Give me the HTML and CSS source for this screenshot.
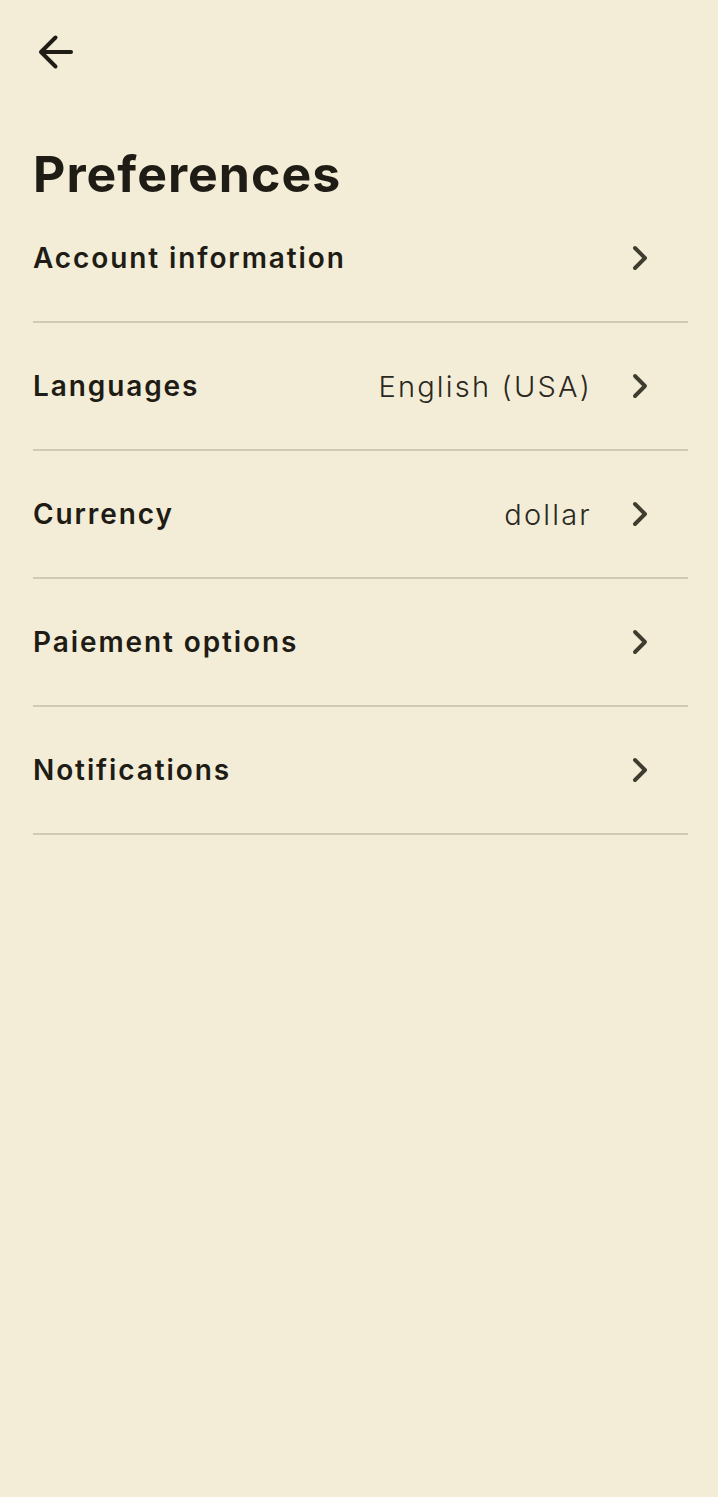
FILE: index.html
```html
<!DOCTYPE html>
<html lang="en">
<head>
<meta charset="utf-8">
<title>Preferences</title>
<link rel="stylesheet" href="styles.css">
</head>
<body>
<div class="page">
  <header class="topbar">
    <button class="back" aria-label="Back">
      <svg width="40" height="40" viewBox="0 0 40 40" fill="none" stroke="#1e1c14" stroke-width="4" stroke-linecap="round" stroke-linejoin="round"><path d="M35 20H6"/><path d="M19.5 5.5L5 20l14.5 14.5"/></svg>
    </button>
  </header>
  <h1 class="title">Preferences</h1>
  <ul class="list">
    <li class="row"><span class="label">Account information</span><span class="value"></span><svg class="chev" width="20" height="28" viewBox="0 0 20 28" fill="none" stroke="#3f3c30" stroke-width="3.9" stroke-linecap="round" stroke-linejoin="round"><path d="M5 4l10 10-10 10"/></svg></li>
    <li class="row"><span class="label">Languages</span><span class="value">English (USA)</span><svg class="chev" width="20" height="28" viewBox="0 0 20 28" fill="none" stroke="#3f3c30" stroke-width="3.9" stroke-linecap="round" stroke-linejoin="round"><path d="M5 4l10 10-10 10"/></svg></li>
    <li class="row"><span class="label">Currency</span><span class="value">dollar</span><svg class="chev" width="20" height="28" viewBox="0 0 20 28" fill="none" stroke="#3f3c30" stroke-width="3.9" stroke-linecap="round" stroke-linejoin="round"><path d="M5 4l10 10-10 10"/></svg></li>
    <li class="row"><span class="label">Paiement options</span><span class="value"></span><svg class="chev" width="20" height="28" viewBox="0 0 20 28" fill="none" stroke="#3f3c30" stroke-width="3.9" stroke-linecap="round" stroke-linejoin="round"><path d="M5 4l10 10-10 10"/></svg></li>
    <li class="row"><span class="label">Notifications</span><span class="value"></span><svg class="chev" width="20" height="28" viewBox="0 0 20 28" fill="none" stroke="#3f3c30" stroke-width="3.9" stroke-linecap="round" stroke-linejoin="round"><path d="M5 4l10 10-10 10"/></svg></li>
  </ul>
</div>
</body>
</html>
```
FILE: styles.css
```css
html, body {
  margin: 0;
  padding: 0;
  background: #f3edd8;
}
body {
  font-family: Inter, "Open Sans", sans-serif;
  color: #1e1c14;
  min-height: 1497px;
}
.page {
  padding: 0 30px 0 33px;
}
.topbar {
  height: 104px;
  display: flex;
  align-items: center;
}
.back {
  background: none;
  border: 0;
  padding: 0;
  margin-left: 3px;
  width: 40px;
  height: 40px;
  display: flex;
  align-items: center;
  justify-content: center;
  cursor: pointer;
}
.title {
  margin: 40px 0 -9px 0;
  font-size: 50px;
  font-weight: 700;
  line-height: 60px;
  letter-spacing: 1px;
}
.list {
  list-style: none;
  margin: 0;
  padding: 0;
}
.row {
  height: 126px;
  border-bottom: 2px solid #d0c9b5;
  display: flex;
  align-items: center;
}
.label {
  font-size: 28px;
  font-weight: 600;
  letter-spacing: 1.9px;
  flex: 1;
}
.value {
  font-size: 29px;
  font-weight: 300;
  letter-spacing: 2.2px;
  color: #2a2820;
  margin-right: 38px;
}
.chev {
  margin-right: 38px;
  flex: none;
}
```
